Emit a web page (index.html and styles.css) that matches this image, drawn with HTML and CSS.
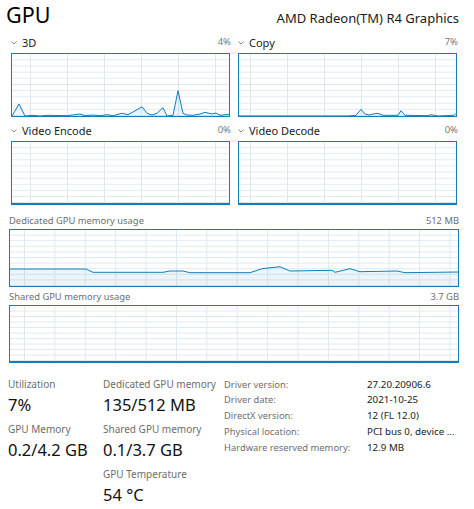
FILE: index.html
```html
<!DOCTYPE html>
<html lang="en">
<head>
<meta charset="utf-8">
<title>GPU</title>
<link rel="stylesheet" href="styles.css">
</head>
<body>
<div class="page">
  <header class="head">
    <h1 class="title">GPU</h1>
    <div class="gpu-name">AMD Radeon(TM) R4 Graphics</div>
  </header>

  <section class="engines">
    <div class="engine">
      <div class="engine-head">
        <span class="eng-label"><svg class="chev" viewBox="0 0 6 4"><polyline points="0.5,0.5 3,3 5.5,0.5"/></svg>3D</span>
        <span class="pct">4%</span>
      </div>
      <div class="chart grid-left">
        <svg class="plot" viewBox="0 0 217 62" preserveAspectRatio="none">
          <polygon class="area" points="0,62 7,50 13,62 21,61.3 28,62 35,61.3 55,61.7 68,60 73,61.7 81,61 88,61.7 95,60.7 101,61.7 110,59.3 116,60.7 121,58 130,52.7 135,59.3 140,61 145,59.3 151,53.7 155,62 161,61.3 166,36.7 171,59.3 175,61 181,61.3 188,60 193,58.3 200,60 204,59 208,61.3 217,60.3 217,62"/>
          <polyline class="line" points="0,62 7,50 13,62 21,61.3 28,62 35,61.3 55,61.7 68,60 73,61.7 81,61 88,61.7 95,60.7 101,61.7 110,59.3 116,60.7 121,58 130,52.7 135,59.3 140,61 145,59.3 151,53.7 155,62 161,61.3 166,36.7 171,59.3 175,61 181,61.3 188,60 193,58.3 200,60 204,59 208,61.3 217,60.3"/>
        </svg>
      </div>
    </div>
    <div class="engine">
      <div class="engine-head">
        <span class="eng-label"><svg class="chev" viewBox="0 0 6 4"><polyline points="0.5,0.5 3,3 5.5,0.5"/></svg>Copy</span>
        <span class="pct">7%</span>
      </div>
      <div class="chart grid-right">
        <svg class="plot" viewBox="0 0 217 62" preserveAspectRatio="none">
          <polygon class="area" points="0,62 109,62 117,61.3 122,55.3 126,60 130,61 134,60 139,59.3 144,61.3 159,61.3 162,56.7 166,61.3 189,61.7 192,60.7 199,62 215,61.3 217,59.3 217,62"/>
          <polyline class="line" points="0,62 109,62 117,61.3 122,55.3 126,60 130,61 134,60 139,59.3 144,61.3 159,61.3 162,56.7 166,61.3 189,61.7 192,60.7 199,62 215,61.3 217,59.3"/>
        </svg>
      </div>
    </div>
    <div class="engine">
      <div class="engine-head">
        <span class="eng-label"><svg class="chev" viewBox="0 0 6 4"><polyline points="0.5,0.5 3,3 5.5,0.5"/></svg>Video Encode</span>
        <span class="pct">0%</span>
      </div>
      <div class="chart grid-left empty"></div>
    </div>
    <div class="engine">
      <div class="engine-head">
        <span class="eng-label"><svg class="chev" viewBox="0 0 6 4"><polyline points="0.5,0.5 3,3 5.5,0.5"/></svg>Video Decode</span>
        <span class="pct">0%</span>
      </div>
      <div class="chart grid-right empty"></div>
    </div>
  </section>

  <section class="mem">
    <div class="mem-head first"><span>Dedicated GPU memory usage</span><span>512 MB</span></div>
    <div class="chart mem-chart">
      <svg class="plot" viewBox="0 0 448 56" preserveAspectRatio="none">
        <polygon class="area" points="0,39 76,39 83,42.3 153,42.3 160,41 173,41 180,42.7 240,42.7 252,38.7 270,36.7 280,41 322,40.3 325,42.3 340,38.7 350,41.7 387,41 395,42.7 448,42 448,56 0,56"/>
        <polyline class="line" points="0,39 76,39 83,42.3 153,42.3 160,41 173,41 180,42.7 240,42.7 252,38.7 270,36.7 280,41 322,40.3 325,42.3 340,38.7 350,41.7 387,41 395,42.7 448,42"/>
      </svg>
    </div>
    <div class="mem-head"><span>Shared GPU memory usage</span><span>3.7 GB</span></div>
    <div class="chart mem-chart empty"></div>
  </section>

  <section class="stats">
    <div class="col col-a">
      <div class="stat"><div class="lbl">Utilization</div><div class="val">7%</div></div>
      <div class="stat"><div class="lbl">GPU Memory</div><div class="val">0.2/4.2 GB</div></div>
    </div>
    <div class="col col-b">
      <div class="stat"><div class="lbl">Dedicated GPU memory</div><div class="val">135/512 MB</div></div>
      <div class="stat"><div class="lbl">Shared GPU memory</div><div class="val">0.1/3.7 GB</div></div>
      <div class="stat"><div class="lbl">GPU Temperature</div><div class="val">54 °C</div></div>
    </div>
    <div class="info">
      <div class="k">Driver version:</div><div class="v">27.20.20906.6</div>
      <div class="k">Driver date:</div><div class="v">2021-10-25</div>
      <div class="k">DirectX version:</div><div class="v">12 (FL 12.0)</div>
      <div class="k">Physical location:</div><div class="v">PCI bus 0, device ...</div>
      <div class="k">Hardware reserved memory:</div><div class="v">12.9 MB</div>
    </div>
  </section>
</div>
</body>
</html>
```

FILE: styles.css
```css
html, body {
  margin: 0;
  padding: 0;
  background: #ffffff;
}

body {
  width: 474px;
  height: 509px;
  overflow: hidden;
  font-family: "Noto Sans", "Open Sans", sans-serif;
  color: #000;
}

.head {
  display: flex;
  justify-content: space-between;
  align-items: baseline;
  height: 29px;
  padding: 0 15px 0 6px;
}

.title {
  margin: 0;
  font-size: 21.5px;
  font-weight: 400;
  line-height: 29px;
}

.gpu-name {
  font-size: 13px;
  color: #1a1a1a;
}

.engines {
  display: grid;
  grid-template-columns: 219px 219px;
  column-gap: 8px;
  padding: 0 17px 0 11px;
}

.engine-head {
  display: flex;
  justify-content: space-between;
  align-items: baseline;
  height: 24px;
  padding-top: 6px;
  box-sizing: border-box;
  line-height: 14px;
}

.eng-label {
  display: flex;
  align-items: center;
  font-size: 11px;
  color: #1a1a1a;
}

.chev {
  width: 6px;
  height: 4px;
  margin-right: 5px;
  fill: none;
  stroke: #8a8a8a;
  stroke-width: 1;
}

.pct {
  font-size: 9.5px;
  color: #777;
  margin-right: -1px;
}

.chart {
  box-sizing: border-box;
  border: 1px solid #117dbb;
  background-color: #fff;
  background-image:
    linear-gradient(to top, #dbe9f3 1px, transparent 1px),
    linear-gradient(to right, #dbe9f3 1px, transparent 1px);
  background-size: 100% 10%, 37px 100%;
}

.engine .chart {
  height: 64px;
}

.grid-left {
  background-position: 0 0, 18px 0;
}

.grid-right {
  background-position: 0 0, 11px 0;
}

.chart.empty {
  border-bottom-width: 2px;
}

.plot {
  display: block;
  width: 100%;
  height: 100%;
}

.plot .area {
  fill: rgba(17, 125, 187, 0.08);
  stroke: none;
}

.plot .line {
  fill: none;
  stroke: #117dbb;
  stroke-width: 1;
  vector-effect: non-scaling-stroke;
}

.mem {
  padding: 0 15px 0 9px;
}

.mem-head {
  display: flex;
  justify-content: space-between;
  align-items: flex-end;
  height: 18px;
  padding-bottom: 2px;
  box-sizing: border-box;
  font-size: 9.4px;
  line-height: 12px;
  color: #6e6e6e;
}

.mem-head.first {
  height: 24px;
}

.mem-chart {
  height: 58px;
  background-size: 100% 10%, 30.4px 100%;
  background-position: 0 0, 14px 0;
}

.stats {
  display: grid;
  grid-template-columns: 95px 121px auto;
  padding: 13px 0 0 8px;
}

.stat + .stat {
  margin-top: 3px;
}

.lbl {
  font-size: 10px;
  line-height: 16px;
  color: #6e6e6e;
  white-space: nowrap;
}

.val {
  font-size: 16.5px;
  line-height: 26px;
  color: #111;
  white-space: nowrap;
}

.info {
  display: grid;
  grid-template-columns: 143px auto;
  font-size: 9.4px;
  line-height: 15.75px;
  align-content: start;
  padding-top: 0.5px;
}

.info .k {
  color: #6e6e6e;
  white-space: nowrap;
}

.info .v {
  color: #1a1a1a;
  white-space: nowrap;
  font-size: 9.8px;
}
```
